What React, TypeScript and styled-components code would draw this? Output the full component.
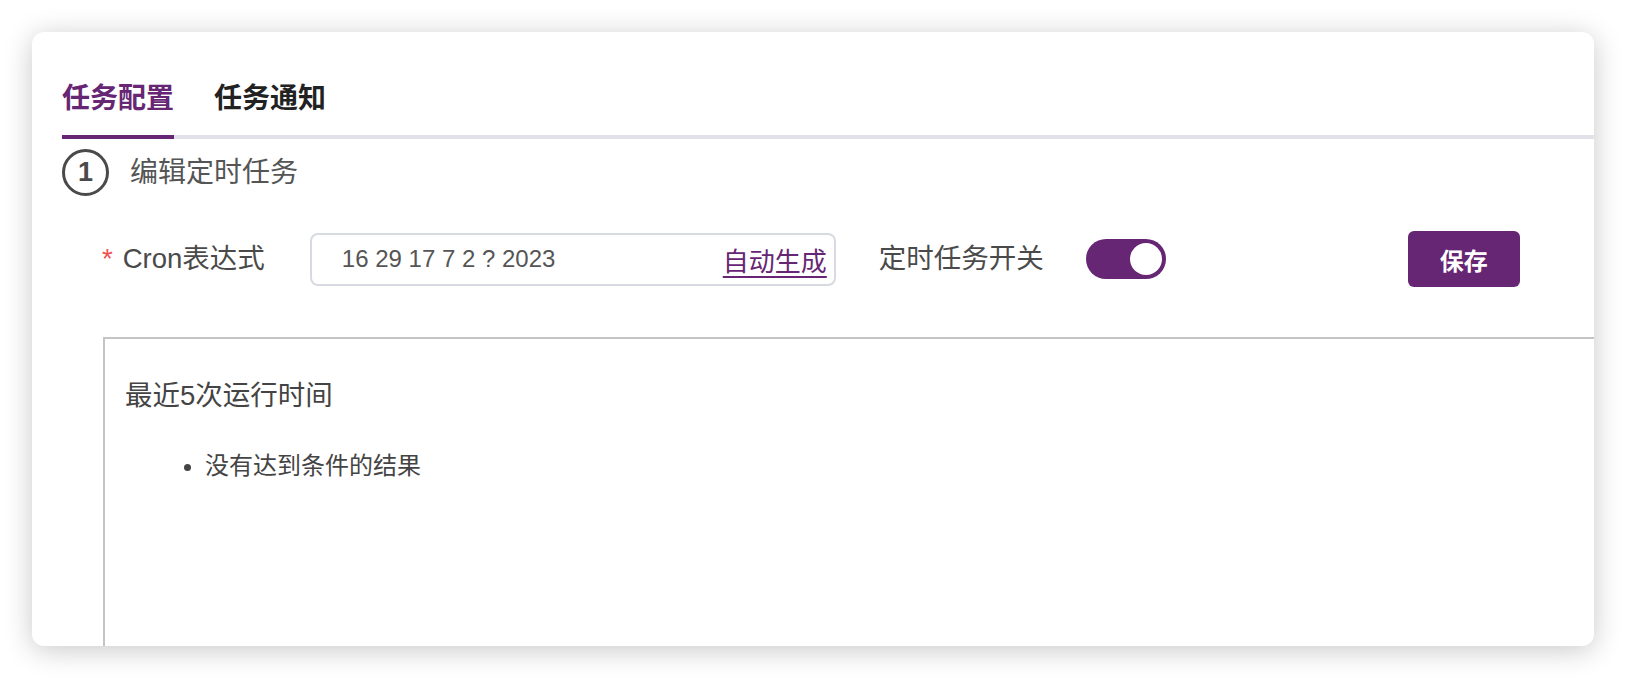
import React from 'react';
import styled, { createGlobalStyle } from 'styled-components';

const purple = '#662673';

const GlobalStyle = createGlobalStyle`
  body {
    margin: 0;
    background: #ffffff;
    font-family: "Liberation Sans", "Noto Sans CJK SC", sans-serif;
  }
`;

export default function App() {
  return (<Page>
    <GlobalStyle/>
    <Card>
      <TabBar>
        <Tab $active>任务配置</Tab>
        <Tab>任务通知</Tab>
      </TabBar>
      <StepRow>
        <StepNumber>1</StepNumber>
        <StepTitle>编辑定时任务</StepTitle>
      </StepRow>
      <FormRow>
        <Label><Required>*</Required>Cron表达式</Label>
        <InputBox>
          <InputValue>16 29 17 7 2 ? 2023</InputValue>
          <AutoLink href="#">自动生成</AutoLink>
        </InputBox>
        <Label $gap={43}>定时任务开关</Label>
        <Switch role="switch" aria-checked="true">
          <Knob/>
        </Switch>
        <SaveButton>保存</SaveButton>
      </FormRow>
      <ResultBox>
        <ResultTitle>最近5次运行时间</ResultTitle>
        <ResultList>
          <ResultItem>没有达到条件的结果</ResultItem>
        </ResultList>
      </ResultBox>
    </Card>
  </Page>);
}

const Page = styled.div`
  padding: 32px;
`;
const Card = styled.div`
  width: 1562px;
  height: 614px;
  box-sizing: border-box;
  padding-left: 30px;
  background: #ffffff;
  border-radius: 12px;
  box-shadow: 0 4px 28px rgba(0, 0, 0, 0.22);
  overflow: hidden;
`;
const TabBar = styled.div`
  display: flex;
  gap: 40px;
  margin-top: 47px;
  border-bottom: 4px solid #e2e0e8;
`;
const Tab = styled.div<{ $active?: boolean }>`
  font-size: 28px;
  line-height: 40px;
  font-weight: 700;
  padding-bottom: 16px;
  margin-bottom: -4px;
  color: ${({ $active }) => ($active ? purple : '#222222')};
  border-bottom: 4px solid ${({ $active }) => ($active ? purple : 'transparent')};
  cursor: pointer;
`;
const StepRow = styled.div`
  display: flex;
  align-items: center;
  gap: 21px;
  margin-top: 10px;
`;
const StepNumber = styled.div`
  width: 47px;
  height: 47px;
  box-sizing: border-box;
  border: 3px solid #4a4a4a;
  border-radius: 50%;
  display: flex;
  align-items: center;
  justify-content: center;
  font-size: 27px;
  font-weight: 700;
  color: #4a4a4a;
`;
const StepTitle = styled.span`
  font-size: 28px;
  line-height: 40px;
  color: #555555;
`;
const FormRow = styled.div`
  display: flex;
  align-items: center;
  margin-top: 35px;
  padding-left: 40px;
`;
const Label = styled.span<{ $gap?: number }>`
  font-size: 27.5px;
  line-height: 40px;
  color: #4a4a4a;
  margin-left: ${({ $gap }) => $gap ?? 0}px;
`;
const Required = styled.span`
  color: #f0524f;
  margin-right: 10px;
`;
const InputBox = styled.div`
  width: 526px;
  height: 53px;
  box-sizing: border-box;
  margin-left: 45px;
  padding: 0 7px 0 30px;
  display: flex;
  align-items: center;
  justify-content: space-between;
  border: 2px solid #d7dae0;
  border-radius: 8px;
`;
const InputValue = styled.span`
  font-size: 24px;
  color: #555555;
`;
const AutoLink = styled.a`
  font-size: 26px;
  color: ${purple};
  text-decoration: underline;
  text-decoration-thickness: 2px;
  text-underline-offset: 5px;
`;
const Switch = styled.div`
  width: 80px;
  height: 40px;
  box-sizing: border-box;
  margin-left: 42px;
  padding: 4px;
  border-radius: 20px;
  background: ${purple};
  display: flex;
  justify-content: flex-end;
  align-items: center;
`;
const Knob = styled.span`
  width: 32px;
  height: 32px;
  border-radius: 50%;
  background: #ffffff;
`;
const SaveButton = styled.button`
  width: 112px;
  height: 56px;
  margin-left: 242px;
  border: none;
  border-radius: 6px;
  background: ${purple};
  color: #ffffff;
  font-family: inherit;
  font-size: 24px;
  font-weight: 700;
  cursor: pointer;
`;
const ResultBox = styled.div`
  width: 1560px;
  height: 400px;
  box-sizing: border-box;
  margin-top: 50px;
  margin-left: 41px;
  padding: 37px 0 0 20px;
  border: 2px solid #c4c4c4;
`;
const ResultTitle = styled.div`
  font-size: 27.5px;
  line-height: 40px;
  color: #444444;
`;
const ResultList = styled.ul`
  margin: 33px 0 0;
  padding-left: 80px;
  list-style: disc;
`;
const ResultItem = styled.li`
  font-size: 24px;
  line-height: 34px;
  color: #444444;
`;
